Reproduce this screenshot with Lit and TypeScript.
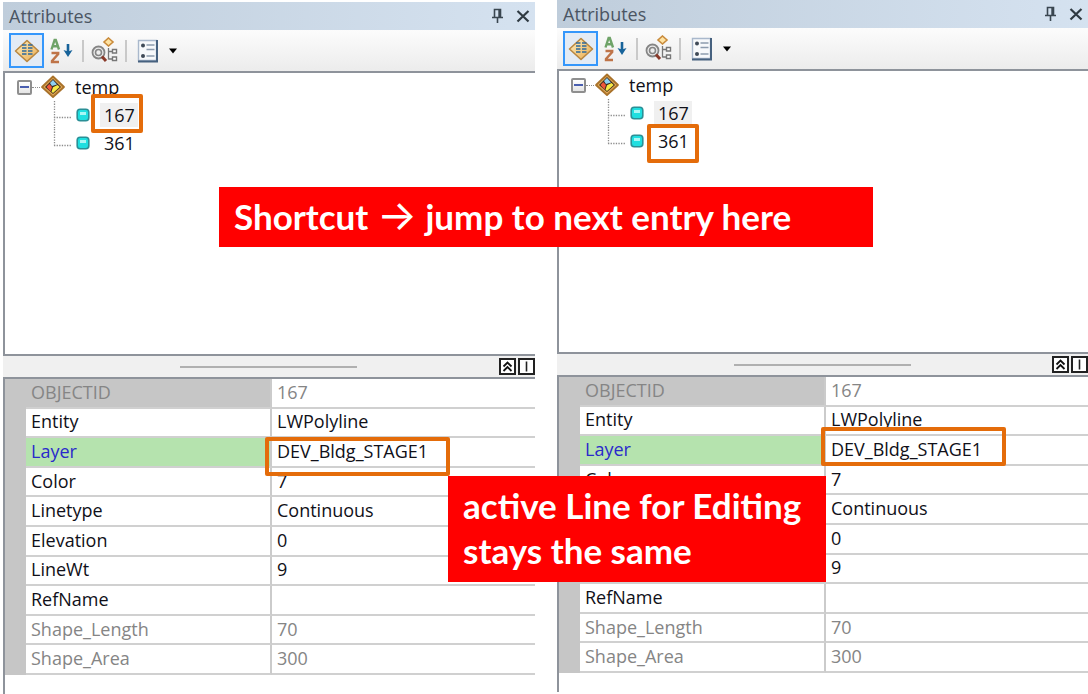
import { LitElement, html, css, nothing } from "lit";
import { customElement, property } from "lit/decorators.js";
import { classMap } from "lit/directives/class-map.js";

interface Attribute {
  name: string;
  value: string;
  kind?: "key" | "readonly" | "active";
}

const ATTRIBUTES: Attribute[] = [
  { name: "OBJECTID", value: "167", kind: "key" },
  { name: "Entity", value: "LWPolyline" },
  { name: "Layer", value: "DEV_Bldg_STAGE1", kind: "active" },
  { name: "Color", value: "7" },
  { name: "Linetype", value: "Continuous" },
  { name: "Elevation", value: "0" },
  { name: "LineWt", value: "9" },
  { name: "RefName", value: "" },
  { name: "Shape_Length", value: "70", kind: "readonly" },
  { name: "Shape_Area", value: "300", kind: "readonly" },
];

const pinIcon = html`<svg width="14" height="16" viewBox="0 0 14 16" fill="none" stroke="#3a4650">
  <path d="M3.5 9V1.5h6V9" stroke-width="1.6" />
  <path d="M8.5 1.5V9" stroke-width="2.4" />
  <path d="M1 9.5h11M6.5 10v5" stroke-width="1.6" />
</svg>`;

const closeIcon = html`<svg width="14" height="14" viewBox="0 0 14 14" stroke="#2f3a42" stroke-width="2.2">
  <path d="M1.5 2 12.5 12.5M12.5 2 1.5 12.5" />
</svg>`;

const tableIcon = html`<svg width="26" height="24" viewBox="0 0 26 24">
  <defs>
    <linearGradient id="gold" x1="0" y1="0" x2="1" y2="1">
      <stop offset="0" stop-color="#fff2c4" />
      <stop offset="1" stop-color="#e9a94c" />
    </linearGradient>
  </defs>
  <path d="M13 1.5 24.5 12 13 22.5 1.5 12Z" fill="url(#gold)" stroke="#b98740" stroke-width="1.6" stroke-linejoin="round" />
  <path d="M8 6h4.5M14 6h4.5M8 9h4.5M14 9h4.5M8 12h4.5M14 12h4.5M8 15h4.5M14 15h4.5" stroke="#2e6a9c" stroke-width="1.7" />
</svg>`;

const sortIcon = html`<svg width="24" height="26" viewBox="0 0 24 26" fill="none">
  <path d="M1.5 11.5 4.6 2h1.2L9 11.5M3 8.2h4.8" stroke="#6fa368" stroke-width="2.4" />
  <path d="M1.5 15h6.7v1L2 23v1h7" stroke="#bf7448" stroke-width="2.4" />
  <path d="M18 6v9" stroke="#17639a" stroke-width="2.6" />
  <path d="M13.5 12 18 13.5l4.5-1.5L18 19Z" fill="#17639a" />
</svg>`;

const findIcon = html`<svg width="28" height="27" viewBox="0 0 28 27" fill="none">
  <path d="M17.5 1 22 5l-4.5 4L13 5Z" fill="#ffe3a2" stroke="#c98b3c" stroke-width="1.6" />
  <circle cx="7.5" cy="15.5" r="6" stroke="#858585" stroke-width="1.8" fill="#eee" />
  <circle cx="7.5" cy="15.5" r="3" stroke="#858585" stroke-width="1.6" />
  <path d="m11 19.5 4 4.5" stroke="#8a3a2a" stroke-width="3" />
  <path d="M17.5 11v11.5M17.5 14.5h4M17.5 22h4" stroke="#777" stroke-width="1.3" />
  <path d="M21.5 12.5h4v3.5h-4ZM21.5 20h4v3.5h-4Z" fill="#fff" stroke="#777" stroke-width="1.4" />
</svg>`;

const listIcon = html`<svg width="22" height="24" viewBox="0 0 22 24">
  <path d="M1.5 1.5h18v20h-18Z" fill="#f7f9fb" stroke="#a9b8cc" stroke-width="1.4" />
  <path d="M20 1v21.5H1" fill="none" stroke="#46617f" stroke-width="2" />
  <circle cx="6" cy="6.5" r="2" fill="#3f4a57" />
  <circle cx="6" cy="17" r="2" fill="#3f4a57" />
  <path d="M9.5 6h8M9.5 17h8M9.5 10.500h8" stroke="#8d9cae" stroke-width="1.6" />
</svg>`;

const caretIcon = html`<svg width="10" height="6" viewBox="0 0 10 6"><path d="M1 .5h8L5 5.5Z" fill="#000" /></svg>`;

const layerIcon = html`<svg width="26" height="24" viewBox="0 0 26 24">
  <path d="M13 1.5 24 12 13 22 2 12Z" fill="#e2aa55" stroke="#a9722b" stroke-width="1.8" stroke-linejoin="round" />
  <path d="M13 4 21 12 13 19 5 12Z" fill="#3b2a20" />
  <path d="M13 5 17 9.5l-5 1.5-2-3Z" fill="#8fd0f2" />
  <path d="M9.2 9 12 12l-1.5 4.5L6.5 12Z" fill="#f0563a" />
  <path d="m17.5 10 2.2 2-6.7 6-1.5-1.2L13 12.3Z" fill="#f7ea45" />
</svg>`;

const featureIcon = html`<svg width="14" height="14" viewBox="0 0 14 14">
  <rect x="1.2" y="1.2" width="11.6" height="11.6" rx="3" fill="#1fdfe0" stroke="#2b8f96" stroke-width="1.6" />
  <path d="M4 4h6v3H4Z" fill="#a8f7f5" />
</svg>`;

const collapseIcon = html`<svg width="13" height="13" viewBox="0 0 13 13" fill="none" stroke="#111" stroke-width="1.8">
  <path d="M2.5 6.5l4-4 4 4M2.5 11l4-4 4 4" />
</svg>`;

const barIcon = html`<svg width="13" height="13" viewBox="0 0 13 13" stroke="#222" stroke-width="1.6"><path d="M6.5 1.5v10" /></svg>`;

const branch = (last: boolean) => html`<svg width="20" height="28" viewBox="0 0 20 28">
  <path d=${last ? "M1.5 0V16.5M1 16.5H18" : "M1.5 0V28M1 16.5H18"} fill="none" stroke="#8c8c8c" stroke-width="1.3" stroke-dasharray="1.3 1.3" />
</svg>`;

@customElement("attributes-panel")
export class AttributesPanel extends LitElement {
  @property() marked = "167";

  static styles = css`
    :host {
      display: flex;
      flex-direction: column;
      min-width: 0;
      font: 18px/24px "Open Sans", "Noto Sans", sans-serif;
      color: #101018;
    }
    button {
      display: flex;
      align-items: center;
      justify-content: center;
      padding: 0;
      border: 0;
      background: none;
    }
    svg { display: block; flex: none; }
    header {
      display: flex;
      align-items: center;
      height: 28px;
      padding-left: 6px;
      background: linear-gradient(90deg, #bfcddb, #d5e2f0);
    }
    h2 { flex: 1; margin: 0; font-size: 18px; font-weight: 400; color: #4b5563; }
    header button { width: 25px; height: 24px; }
    .toolbar {
      display: flex;
      align-items: center;
      height: 41px;
      padding-left: 6px;
      background: linear-gradient(#fcfcfc, #ececec);
    }
    .tool { width: 35px; height: 35px; }
    .tool.on { border: 2px solid #3597fb; background: #e3ebf5; box-sizing: border-box; }
    .toolbar hr { width: 2px; height: 22px; margin: 0 3px; border: 0; background: #c9c9c9; }
    .tool.narrow { width: 16px; }
    .tree {
      flex: none;
      height: 281px;
      border: 2px solid #8e939b;
      border-right: 0;
      background: #fff;
    }
    ul { margin: 0; padding: 0; list-style: none; }
    .node { display: flex; align-items: center; height: 28px; padding-left: 12px; }
    .toggle {
      width: 15px;
      height: 15px;
      border: 2px solid #8f8f8f;
      border-radius: 2px;
      box-sizing: border-box;
      background: linear-gradient(#fff, #e4e4e4);
    }
    .toggle i { width: 9px; height: 2px; background: #4a5fb0; }
    .stub { width: 8px; border-top: 1px dotted #8c8c8c; }
    .name { padding-left: 9px; }
    .leaf { display: flex; align-items: center; height: 28px; padding-left: 48px; }
    .glyph { margin: 0 10px 0 3px; }
    .id { position: relative; padding: 0 3px 0 4px; }
    .id.current { background: #f0f0f0; }
    .mark {
      position: absolute;
      z-index: 1;
      box-sizing: border-box;
      border: 4px solid #e46c0a;
      border-radius: 2px;
    }
    .id .mark { left: -9px; top: -9px; width: 52px; height: 39px; }
    .id:not(.current) .mark { left: -7px; top: -5px; }
    .splitter {
      display: flex;
      align-items: center;
      justify-content: flex-end;
      gap: 2px;
      height: 21px;
      background: #f0f0f0;
    }
    .splitter::before { content: ""; width: 35px; }
    .grip { width: 177px; height: 2px; margin: 0 auto; background: #b0b0b0; }
    .splitter button { width: 17px; height: 17px; border: 2px solid #222; box-sizing: border-box; background: #fff; }
    .grid { flex: 1; border: solid #8e939b; border-width: 2px 0 0 2px; background: #fff; }
    table { width: 100%; height: 296px; border-spacing: 0; table-layout: fixed; }
    .gutter { width: 21px; }
    .names { width: 246px; }
    th, td {
      position: relative;
      padding: 0 5px 2px;
      border-bottom: 2px solid #d0d0d0;
      text-align: left;
      font-weight: 400;
      white-space: nowrap;
    }
    th { border-right: 2px solid #cbcbcb; }
    td:first-child { background: #c6c6c6; border-color: #c6c6c6; }
    .key th { background: #c6c6c6; }
    .key th, .key td, .readonly th, .readonly td { color: #858585; }
    .active th { background: #b5e3ae; color: #2a2acb; }
    td .mark { left: -7px; top: -1px; width: 185px; height: 39px; }
    .raised td .mark { left: -5px; top: -9px; }
  `;

  private leaf(id: string, last: boolean) {
    const current = id === "167";
    return html`<li class="leaf">
      ${branch(last)}
      <span class="glyph">${featureIcon}</span>
      <span class=${classMap({ id: true, current })}>${id}${this.marked === id ? html`<span class="mark"></span>` : nothing}</span>
    </li>`;
  }

  render() {
    return html`
      <header>
        <h2>Attributes</h2>
        <button aria-label="Pin">${pinIcon}</button>
        <button aria-label="Close">${closeIcon}</button>
      </header>
      <div class="toolbar">
        <button class="tool on" aria-label="Table view">${tableIcon}</button>
        <button class="tool" aria-label="Sort">${sortIcon}</button>
        <hr />
        <button class="tool" aria-label="Find">${findIcon}</button>
        <hr />
        <button class="tool" aria-label="Options">${listIcon}</button>
        <button class="tool narrow" aria-label="More options">${caretIcon}</button>
      </div>
      <div class="tree">
        <div class="node">
          <button class="toggle" aria-label="Collapse temp"><i></i></button>
          <span class="stub"></span>
          ${layerIcon}
          <span class="name">temp</span>
        </div>
        <ul>${this.leaf("167", false)}${this.leaf("361", true)}</ul>
      </div>
      <div class="splitter">
        <span class="grip"></span>
        <button aria-label="Collapse">${collapseIcon}</button>
        <button aria-label="Split">${barIcon}</button>
      </div>
      <div class="grid">
        <table class=${classMap({ raised: this.marked === "361" })}>
          <colgroup><col class="gutter" /><col class="names" /><col /></colgroup>
          <tbody>
            ${ATTRIBUTES.map(
              (a) => html`<tr class=${a.kind ?? ""}>
                <td></td>
                <th scope="row">${a.name}</th>
                <td>${a.value}${a.kind === "active" ? html`<span class="mark"></span>` : nothing}</td>
              </tr>`
            )}
          </tbody>
        </table>
      </div>
    `;
  }
}

@customElement("app-root")
export class AppRoot extends LitElement {
  static styles = css`
    :host {
      display: grid;
      position: relative;
      grid-template-columns: 532fr 531fr;
      gap: 22px;
      box-sizing: border-box;
      min-height: 100vh;
      padding-left: 3px;
      overflow: hidden;
      background: #fff;
    }
    .before { margin-top: 2px; }
    .after { margin-bottom: 2px; }
    .callout {
      position: absolute;
      z-index: 2;
      box-sizing: border-box;
      margin: 0;
      padding: 7px 15px 8px;
      background: #f00;
      color: #fff;
      font: 700 35px/45px Lato, "Open Sans", sans-serif;
      white-space: nowrap;
    }
    .jump { left: calc(50% - 325px); top: 187px; width: 654px; }
    .stays { left: calc(50% - 96px); top: 476px; width: 378px; padding-bottom: 9px; }
    .arrow { font-family: Inter, sans-serif; font-size: 42px; font-weight: 400; line-height: 0; }
  `;

  render() {
    return html`
      <attributes-panel class="before" marked="167"></attributes-panel>
      <attributes-panel class="after" marked="361"></attributes-panel>
      <p class="callout jump">Shortcut <span class="arrow">→</span> jump to next entry here</p>
      <p class="callout stays">active Line for Editing<br />stays the same</p>
    `;
  }
}
